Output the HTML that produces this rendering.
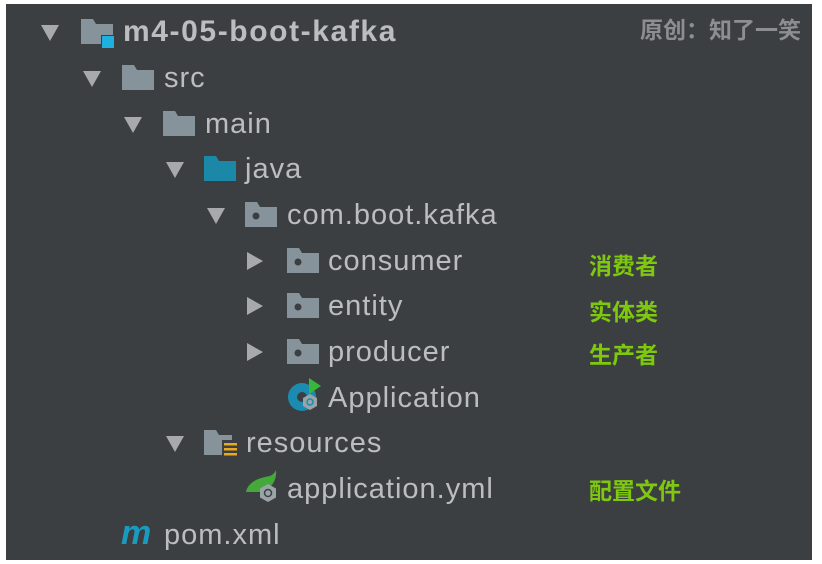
<!DOCTYPE html>
<html><head><meta charset="utf-8"><style>
html,body{margin:0;padding:0;background:#fff;width:822px;height:564px;overflow:hidden}
#p{position:absolute;left:6px;top:4px;width:806px;height:556px;background:#3c3f41}
.t{position:absolute;font-family:"Liberation Sans",sans-serif;font-size:29px;letter-spacing:1px;color:#bbbdbf;line-height:30px;white-space:nowrap}
.c{position:absolute;font-family:"Liberation Sans","Noto Sans CJK SC",sans-serif;font-weight:bold;font-size:23px;color:#7ec80e;line-height:26px;white-space:nowrap}
.tri{position:absolute;width:0;height:0;border-left:9px solid transparent;border-right:9px solid transparent;border-top:16px solid #a8a9ab}
.tr{position:absolute;width:0;height:0;border-top:9px solid transparent;border-bottom:9px solid transparent;border-left:16px solid #a8a9ab}
</style></head><body>
<div id="p"></div>
<svg width="822" height="564" style="position:absolute;left:0;top:0">
<defs>
<g id="fold"><path d="M0 0h12l3 5h17v20H0z" fill="#87939a"/></g>
<g id="pkg"><path d="M0 0h12l3 5h17v20H0z" fill="#87939a"/><circle cx="11" cy="14" r="3.5" fill="#3c3f41"/></g>
</defs>
<use href="#fold" x="81" y="19"/><rect x="101" y="35" width="14" height="14" fill="#3c3f41"/><rect x="102" y="36" width="12" height="12" fill="#1fb0e0"/>
<use href="#fold" x="122" y="65"/>
<use href="#fold" x="163" y="111"/>
<path d="M204 156h12l3 5h17v20H204z" fill="#1b88a8"/>
<use href="#pkg" x="245" y="202"/>
<use href="#pkg" x="287" y="248"/>
<use href="#pkg" x="287" y="293"/>
<use href="#pkg" x="287" y="339"/>
<circle cx="302" cy="397" r="14" fill="#1b8cb0"/><circle cx="302" cy="397" r="5" fill="#3c3f41"/>
<path d="M309 378l12 8-12 8z" fill="#38b83a"/>
<path d="M310 394l7 4v8l-7 4-7-4v-8z" fill="#9aa3a8"/><circle cx="310" cy="402" r="3" fill="none" stroke="#1b8cb0" stroke-width="1.5"/>
<path d="M204 430h12l3 5h13v20H204z" fill="#87939a"/><rect x="222" y="440" width="16" height="18" fill="#3c3f41"/>
<g fill="#e8a820"><rect x="224" y="443" width="13" height="2.5"/><rect x="224" y="448" width="13" height="2.5"/><rect x="224" y="453" width="13" height="2.5"/></g>
<path d="M246 492c2-10 12-14 24-16 4-2 5-4 6-6 1 10-4 18-14 22z" fill="#45a83a"/>
<path d="M268 484l8 4.5v9l-8 4.5-8-4.5v-9z" fill="#9aa3a8"/><circle cx="268" cy="493" r="3.5" fill="none" stroke="#3c3f41" stroke-width="1.5"/>
</svg>
<div class="tri" style="left:41px;top:25px"></div>
<div class="tri" style="left:83px;top:71px"></div>
<div class="tri" style="left:124px;top:117px"></div>
<div class="tri" style="left:166px;top:162px"></div>
<div class="tri" style="left:207px;top:208px"></div>
<div class="tr" style="left:247px;top:252px"></div>
<div class="tr" style="left:247px;top:297px"></div>
<div class="tr" style="left:247px;top:343px"></div>
<div class="tri" style="left:166px;top:436px"></div>
<div class="t" style="left:123px;top:17px;font-weight:bold;font-size:30px;letter-spacing:1.6px">m4-05-boot-kafka</div>
<div class="t" style="left:164px;top:63px">src</div>
<div class="t" style="left:205px;top:109px">main</div>
<div class="t" style="left:245px;top:154px">java</div>
<div class="t" style="left:287px;top:200px">com.boot.kafka</div>
<div class="t" style="left:328px;top:246px">consumer</div>
<div class="t" style="left:328px;top:291px">entity</div>
<div class="t" style="left:328px;top:337px">producer</div>
<div class="t" style="left:328px;top:383px">Application</div>
<div class="t" style="left:246px;top:428px">resources</div>
<div class="t" style="left:287px;top:474px">application.yml</div>
<div class="t" style="left:121px;top:518px;color:#1b9ac0;font-weight:bold;font-style:italic;font-size:34px">m</div>
<div class="t" style="left:164px;top:520px">pom.xml</div>
<div class="c" style="left:589px;top:253px">消费者</div>
<div class="c" style="left:589px;top:299px">实体类</div>
<div class="c" style="left:589px;top:342px">生产者</div>
<div class="c" style="left:589px;top:478px">配置文件</div>
<div class="c" style="left:640px;top:17px;color:#8c8e90">原创：知了一笑</div>
</body></html>
